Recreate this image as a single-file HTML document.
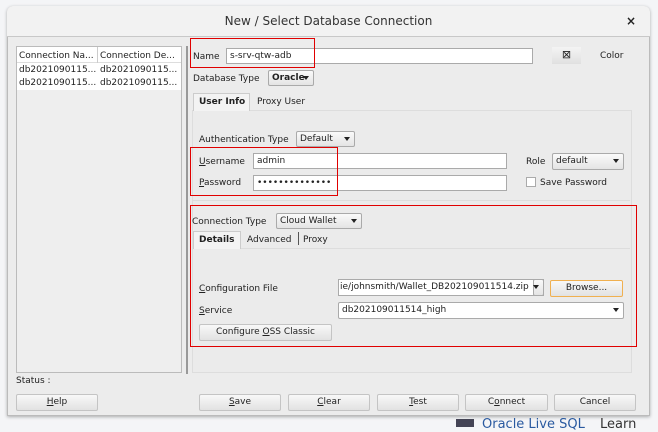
<!DOCTYPE html>
<html><head><style>
*{margin:0;padding:0;box-sizing:border-box}
body{width:658px;height:427px;background:#f4f5f7;position:relative;overflow:hidden;font-family:"DejaVu Sans","Liberation Sans",sans-serif;font-size:9px;color:#222}
.a{position:absolute}
.dlg{left:7px;top:6px;width:643px;height:410px;background:#ececec;border:1px solid #bbb;border-radius:6px 6px 0 0;box-shadow:0 1px 3px rgba(0,0,0,.3)}
.title{left:7px;top:6px;width:643px;height:31px;background:#f2f2f2;border-bottom:1px solid #c8c8c8;border-radius:6px 6px 0 0;text-align:center;font-size:12px;line-height:31px;color:#333}
.fld{background:#fff;border:1px solid #aaa;height:16px;line-height:15px;padding-left:3px;white-space:nowrap;overflow:hidden}
.sel{background:linear-gradient(#fafafa,#e4e4e4);border:1px solid #aaa;border-radius:2px;height:16px;line-height:15px;padding-left:3px}
.sel:after{content:"";position:absolute;right:4px;top:5px;border:3.5px solid transparent;border-top:4px solid #222}
.btn{background:linear-gradient(#f8f8f8,#e2e2e2);border:1px solid #c4c4c4;border-radius:2px;height:16px;line-height:15px;text-align:center}
.red{border:1px solid #e00000}
</style></head><body>
<div class="a dlg"></div>
<div class="a title">New / Select Database Connection</div>
<div class="a" style="left:626px;top:14px;font-size:12px;font-weight:bold">×</div>

<div class="a" style="left:16px;top:46px;width:166px;height:327px;background:#eee;border:1px solid #bbb"></div>
<div class="a" style="left:17px;top:47px;width:164px;height:16px;background:#fff;border-bottom:1px solid #ddd"></div>
<div class="a" style="left:97px;top:47px;width:1px;height:16px;background:#ccc"></div>
<div class="a" style="left:19px;top:51px">Connection Na...</div>
<div class="a" style="left:100px;top:51px">Connection De...</div>
<div class="a" style="left:17px;top:63px;width:164px;height:27px;background:#fff"></div>
<div class="a" style="left:19px;top:65px">db2021090115...</div>
<div class="a" style="left:100px;top:65px">db2021090115...</div>
<div class="a" style="left:19px;top:78px">db2021090115...</div>
<div class="a" style="left:100px;top:78px">db2021090115...</div>
<div class="a" style="left:186px;top:46px;width:2px;height:328px;background:#999"></div>

<div class="a" style="left:193px;top:52px">Name</div>
<div class="a fld" style="left:226px;top:48px;width:307px">s-srv-qtw-adb</div>
<div class="a" style="left:552px;top:47px;width:29px;height:17px;background:linear-gradient(#f4f4f4,#e0e0e0);text-align:center;font-size:11px;line-height:16px">&#x22A0;</div>
<div class="a" style="left:600px;top:51px">Color</div>
<div class="a" style="left:193px;top:74px">Database Type</div>
<div class="a sel" style="left:268px;top:70px;width:46px;font-weight:bold;padding-right:10px">Oracle</div>

<div class="a" style="left:192px;top:110px;width:440px;height:263px;border:1px solid #ddd;background:#ebebeb"></div>
<div class="a" style="left:193px;top:93px;width:57px;height:18px;background:#f3f3f3;border:1px solid #ccc;border-bottom:none;font-weight:bold;padding:3px 0 0 5px">User Info</div>
<div class="a" style="left:257px;top:97px">Proxy User</div>
<div class="a" style="left:193px;top:111px;width:437px;height:90px;border-bottom:1px solid #ddd"></div>

<div class="a" style="left:199px;top:135px">Authentication Type</div>
<div class="a sel" style="left:296px;top:131px;width:59px">Default</div>
<div class="a" style="left:199px;top:157px"><u>U</u>sername</div>
<div class="a fld" style="left:253px;top:153px;width:254px">admin</div>
<div class="a" style="left:199px;top:178px"><u>P</u>assword</div>
<div class="a fld" style="left:253px;top:175px;width:254px">••••••••••••••</div>
<div class="a" style="left:526px;top:157px">Role</div>
<div class="a sel" style="left:552px;top:153px;width:72px;height:17px">default</div>
<div class="a" style="left:526px;top:177px;width:10px;height:10px;background:#fff;border:1px solid #aaa"></div>
<div class="a" style="left:540px;top:178px">Save Password</div>

<div class="a" style="left:192px;top:217px">Connection Type</div>
<div class="a sel" style="left:276px;top:213px;width:86px">Cloud Wallet</div>
<div class="a" style="left:193px;top:248px;width:437px;height:98px;border-top:1px solid #ddd"></div>
<div class="a" style="left:193px;top:231px;width:48px;height:18px;background:#f3f3f3;border:1px solid #ccc;border-bottom:none;font-weight:bold;padding:3px 0 0 5px">Details</div>
<div class="a" style="left:247px;top:235px">Advanced</div>
<div class="a" style="left:298px;top:232px;width:1px;height:13px;background:#555"></div>
<div class="a" style="left:303px;top:235px">Proxy</div>

<div class="a" style="left:199px;top:284px"><u>C</u>onfiguration File</div>
<div class="a fld" style="left:338px;top:279px;width:206px;height:17px;padding-left:1px">ie/johnsmith/Wallet_DB202109011514.zip</div>
<div class="a sel" style="left:533px;top:279px;width:11px;height:17px;padding:0"></div>
<div class="a btn" style="left:550px;top:280px;width:73px;height:17px;border:1px solid #f0b050">Browse...</div>
<div class="a" style="left:199px;top:306px"><u>S</u>ervice</div>
<div class="a sel" style="left:338px;top:302px;width:286px;height:17px;background:#fff">db202109011514_high</div>
<div class="a btn" style="left:199px;top:324px;width:133px;height:17px">Configure <u>O</u>SS Classic</div>

<div class="a red" style="left:190px;top:38px;width:125px;height:30px"></div>
<div class="a red" style="left:190px;top:147px;width:148px;height:49px"></div>
<div class="a red" style="left:190px;top:205px;width:447px;height:142px"></div>

<div class="a" style="left:16px;top:376px">Status :</div>
<div class="a btn" style="left:16px;top:394px;width:82px;height:17px"><u>H</u>elp</div>
<div class="a btn" style="left:199px;top:394px;width:82px;height:17px"><u>S</u>ave</div>
<div class="a btn" style="left:288px;top:394px;width:82px;height:17px"><u>C</u>lear</div>
<div class="a btn" style="left:377px;top:394px;width:82px;height:17px"><u>T</u>est</div>
<div class="a btn" style="left:465px;top:394px;width:83px;height:17px">C<u>o</u>nnect</div>
<div class="a btn" style="left:554px;top:394px;width:82px;height:17px">Cancel</div>

<div class="a" style="left:456px;top:419px;width:18px;height:8px;background:#445"></div>
<div class="a" style="left:482px;top:417px;font-size:13px;color:#2a5aa0">Oracle Live SQL</div>
<div class="a" style="left:600px;top:417px;font-size:13px;color:#333">Learn</div>
</body></html>
